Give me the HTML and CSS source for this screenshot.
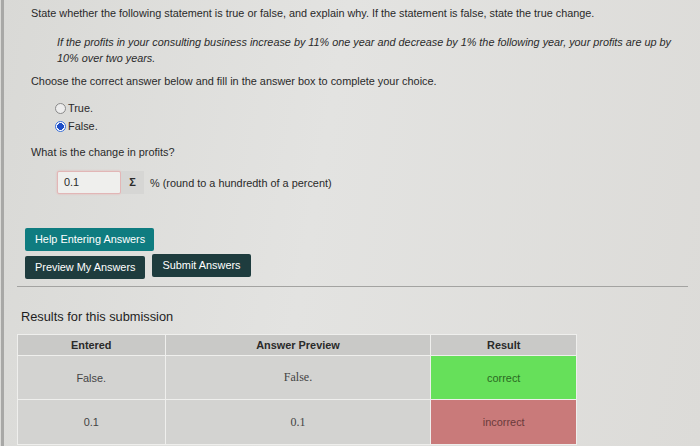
FILE: index.html
```html
<!DOCTYPE html>
<html>
<head>
<meta charset="utf-8">
<link rel="stylesheet" href="styles.css">
</head>
<body>
<div class="page">
  <p class="lead">State whether the following statement is true or false, and explain why. If the statement is false, state the true change.</p>
  <p class="statement">If the profits in your consulting business increase by 11% one year and decrease by 1% the following year, your profits are up by 10% over two years.</p>
  <p class="choose">Choose the correct answer below and fill in the answer box to complete your choice.</p>
  <div class="options">
    <label class="opt"><span class="radio"></span>True.</label>
    <label class="opt"><span class="radio on"></span>False.</label>
  </div>
  <p class="question">What is the change in profits?</p>
  <div class="answer">
    <div class="input">0.1</div>
    <div class="sigma">Σ</div>
    <span class="unit">% (round to a hundredth of a percent)</span>
  </div>
  <div class="buttons">
    <div class="row1"><span class="btn help">Help Entering Answers</span></div>
    <div class="row2"><span class="btn dark">Preview My Answers</span><span class="btn dark">Submit Answers</span></div>
  </div>
  <hr class="rule">
  <h3 class="results">Results for this submission</h3>
  <table class="tbl">
    <tr class="head"><th class="c1">Entered</th><th class="c2">Answer Preview</th><th class="c3">Result</th></tr>
    <tr class="r1"><td class="c1">False.</td><td class="c2 math">False.</td><td class="c3 ok">correct</td></tr>
    <tr class="r2"><td class="c1">0.1</td><td class="c2 math">0.1</td><td class="c3 bad">incorrect</td></tr>
  </table>
</div>
</body>
</html>
```
FILE: styles.css
```css
html, body {
  margin: 0;
  padding: 0;
  height: 100%;
  overflow: hidden;
}
body {
  background: linear-gradient(100deg, #d9d9d6 0%, #e3e3e1 45%, #dcdbd8 100%);
  font-family: "Liberation Sans", Arial, sans-serif;
  color: #2a2a2a;
}
.page {
  border-left: 3px solid #a8a8a6;
  margin-left: 1px;
  height: 446px;
  padding: 6px 12px 0 13px;
  box-sizing: border-box;
}
p { margin: 0; }
.lead {
  font-size: 10.85px;
  padding-left: 14px;
  line-height: 14px;
}
.statement {
  font-style: italic;
  font-size: 10.85px;
  line-height: 16px;
  padding: 14px 0 0 40px;
}
.choose {
  font-size: 10.9px;
  padding: 8px 0 0 14px;
  line-height: 14px;
}
.options {
  display: flex;
  flex-direction: column;
  gap: 4px;
  padding: 13px 0 0 38px;
}
.opt {
  display: flex;
  align-items: center;
  gap: 2px;
  font-size: 10.9px;
  line-height: 14px;
}
.radio {
  width: 9px;
  height: 9px;
  border: 1px solid #8a8a8a;
  border-radius: 50%;
  background: #ececec;
  box-sizing: content-box;
  position: relative;
}
.radio.on {
  border-color: #3a6fd8;
  background: radial-gradient(circle, #1f4fc8 0 3.2px, #ffffff 3.6px);
}
.question {
  font-size: 10.9px;
  padding: 12px 0 0 14px;
  line-height: 14px;
}
.answer {
  display: flex;
  align-items: center;
  padding: 12px 0 0 40px;
}
.input {
  width: 56px;
  height: 21px;
  border: 1px solid #e2b6b6;
  box-shadow: 0 0 2px #e8b0b0;
  border-radius: 2px;
  background: #efefed;
  font-size: 10.9px;
  line-height: 21px;
  padding-left: 6px;
  box-sizing: content-box;
}
.sigma {
  width: 23px;
  height: 23px;
  background: #d6d6d4;
  font-size: 11px;
  font-weight: bold;
  text-align: center;
  line-height: 23px;
}
.unit {
  font-size: 10.9px;
  padding-left: 6px;
}
.buttons {
  padding: 34px 0 0 8px;
  display: flex;
  flex-direction: column;
  gap: 5px;
}
.row2 {
  display: flex;
  gap: 7px;
  align-items: flex-start;
}
.btn {
  display: inline-block;
  color: #fff;
  font-size: 10.9px;
  line-height: 23px;
  padding: 0 10px;
  border-radius: 2px;
}
.help { background: #0f7c80; padding: 0 9px 0 10px; }
.dark { background: #1e3c3e; }
.row2 .dark:last-child { margin-top: -2px; }
.rule {
  margin: 7px 0 0 0;
  border: 0;
  border-top: 1px solid #a3a3a1;
  width: 671px;
}
.results {
  margin: 0;
  font-size: 12.8px;
  font-weight: normal;
  color: #1e1e1e;
  padding: 22px 0 0 4px;
  line-height: 16px;
}
.tbl {
  margin-top: 9px;
  border-collapse: collapse;
  width: 560px;
  font-size: 10.9px;
}
.tbl th, .tbl td {
  border: 1px solid #efefed;
  text-align: center;
  padding: 0;
}
.tbl .c1 { width: 147px; }
.tbl .c2 { width: 266px; }
.tbl .c3 { width: 145px; }
.head th {
  background: #c9c9c7;
  height: 20px;
  font-weight: bold;
  color: #2a2a2a;
  font-size: 10.9px;
}
.r1 td { height: 43px; background: #d3d3d1; color: #444; }
.r2 td { height: 44px; background: #d3d3d1; color: #444; }
.math { font-family: "Liberation Serif", "Times New Roman", serif; font-size: 12px; color: #333; }
.ok { background: #66e05a !important; color: #2a6a22 !important; }
.bad { background: #c97a7a !important; color: #6a3a3a !important; }
```
